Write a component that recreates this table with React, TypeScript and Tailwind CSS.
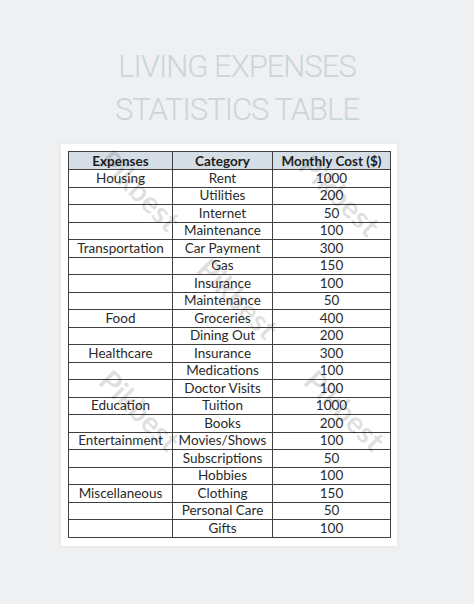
const rows: [string, string, string][] = [
  ['Housing', 'Rent', '1000'],
  ['', 'Utilities', '200'],
  ['', 'Internet', '50'],
  ['', 'Maintenance', '100'],
  ['Transportation', 'Car Payment', '300'],
  ['', 'Gas', '150'],
  ['', 'Insurance', '100'],
  ['', 'Maintenance', '50'],
  ['Food', 'Groceries', '400'],
  ['', 'Dining Out', '200'],
  ['Healthcare', 'Insurance', '300'],
  ['', 'Medications', '100'],
  ['', 'Doctor Visits', '100'],
  ['Education', 'Tuition', '1000'],
  ['', 'Books', '200'],
  ['Entertainment', 'Movies/Shows', '100'],
  ['', 'Subscriptions', '50'],
  ['', 'Hobbies', '100'],
  ['Miscellaneous', 'Clothing', '150'],
  ['', 'Personal Care', '50'],
  ['', 'Gifts', '100'],
];

// faint stock watermark, centre points
const marks = [
  { left: 140, top: 190 },
  { left: 340, top: 195 },
  { left: 238, top: 298 },
  { left: 140, top: 410 },
  { left: 345, top: 410 },
];

export default function App() {
  return (
    <div className="relative w-[474px] h-[604px] overflow-hidden bg-[#eef0f2] font-['Lato','Noto_Sans',sans-serif]">
      <div className="pt-[45px] flex flex-col items-center font-['Roboto',sans-serif] text-[31px] leading-[43px] font-light text-[#cbd5d8] tracking-[-1px]">
        <span>LIVING EXPENSES</span>
        <span>STATISTICS TABLE</span>
      </div>

      <div className="mt-[13px] mx-[61px] w-[336px] bg-white p-[7px] pb-[8px] shadow-[0_0_6px_rgba(0,0,0,0.06)]">
        <table className="w-[322px] border-collapse border-[1.5px] border-[#3f3f3f] text-[13.5px] text-[#2a2a2a] table-fixed">
          <colgroup>
            <col className="w-[104px]" />
            <col className="w-[100px]" />
            <col className="w-[118px]" />
          </colgroup>
          <thead>
            <tr className="h-[18px] bg-[#d5dee6] text-[#1d1d1d]">
              <th className="border border-[#3f3f3f] p-0 leading-[16px] font-bold">Expenses</th>
              <th className="border border-[#3f3f3f] p-0 leading-[16px] font-bold">Category</th>
              <th className="border border-[#3f3f3f] p-0 leading-[16px] font-bold">Monthly Cost ($)</th>
            </tr>
          </thead>
          <tbody>
            {rows.map(([exp, cat, cost], i) => (
              <tr key={i} className="h-[17.5px]">
                <td className="border border-[#3f3f3f] p-0 text-center leading-[15px]">{exp}</td>
                <td className="border border-[#3f3f3f] p-0 text-center leading-[15px]">{cat}</td>
                <td className="border border-[#3f3f3f] p-0 text-center leading-[15px]">{cost}</td>
              </tr>
            ))}
          </tbody>
        </table>
      </div>

      {marks.map((m, i) => (
        <span
          key={i}
          className="absolute -translate-x-1/2 -translate-y-1/2 rotate-45 text-[30px] font-bold text-black/[0.12] pointer-events-none select-none"
          style={{ left: m.left, top: m.top }}
        >
          Pikbest
        </span>
      ))}
    </div>
  );
}
